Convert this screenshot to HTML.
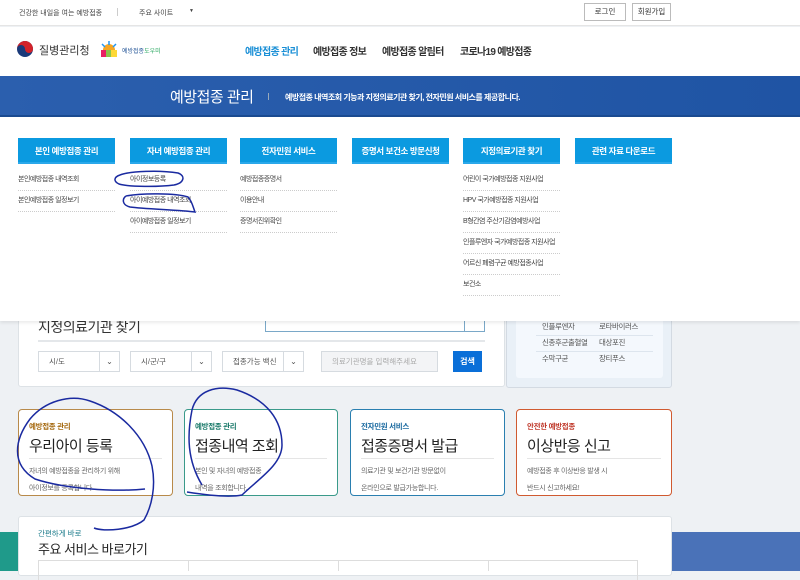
<!DOCTYPE html>
<html><head><meta charset="utf-8"><style>
*{margin:0;padding:0;box-sizing:border-box}
body{width:800px;height:571px;overflow:hidden;position:relative;background:#eef1f4;font-family:"Liberation Sans","Noto Sans CJK KR",sans-serif;color:#333}
.a{position:absolute}
.t{white-space:nowrap}
.btn{position:absolute;top:138px;height:26px;width:97px;background:#0b9ae0;color:#fff;font-size:8.5px;font-weight:bold;text-align:center;line-height:26px;border-bottom:2px solid #2aa8ea;letter-spacing:-0.4px}
.lk{position:absolute;font-size:7px;color:#444;width:97px;height:21px;line-height:20px;border-bottom:1px dotted #ccc;white-space:nowrap;letter-spacing:-0.5px}
.sel{position:absolute;top:351px;height:21px;border:1px solid #d6dbe0;background:#fff;font-size:7.5px;line-height:19px;padding-left:10px;color:#555}
.sel i{position:absolute;right:0;top:0;width:20px;height:19px;border-left:1px solid #d6dbe0;font-style:normal;text-align:center;font-size:8px}
.card{position:absolute;top:409px;height:87px;background:#fff;border:1px solid;border-radius:4px}
.card .c{position:absolute;left:10px;top:11px;font-size:7.5px;font-weight:bold;letter-spacing:-0.3px}
.card .h{position:absolute;left:10px;top:25px;font-size:15px;color:#222;letter-spacing:-0.5px}
.card .l{position:absolute;left:10px;right:10px;top:48px;border-top:1px solid #e5e5e5}
.card .d{position:absolute;left:10px;top:53px;font-size:7px;color:#666;line-height:17px;white-space:nowrap;letter-spacing:-0.3px}
</style></head><body>
<div class="a" style="left:0;top:0;width:800px;height:26px;background:#fff;border-bottom:1px solid #e5e5e5"></div>
<div class="a t" style="left:19px;top:8px;font-size:7px;color:#444">건강한 내일을 여는 예방접종</div>
<div class="a" style="left:117px;top:8px;width:1px;height:8px;background:#ccc"></div>
<div class="a t" style="left:139px;top:8px;font-size:7px;color:#444">주요 사이트</div>
<div class="a t" style="left:189px;top:8px;font-size:5px;color:#444">▼</div>
<div class="a t" style="left:584px;top:3px;width:42px;height:18px;border:1px solid #bbb;font-size:7.5px;text-align:center;line-height:16px;background:#fff">로그인</div>
<div class="a t" style="left:632px;top:3px;width:39px;height:18px;border:1px solid #bbb;font-size:7.5px;text-align:center;line-height:16px;background:#fff">회원가입</div>
<div class="a" style="left:0;top:27px;width:800px;height:49px;background:#fff"></div>
<svg class="a" style="left:17px;top:41px" width="16" height="16" viewBox="0 0 16 16"><circle cx="8" cy="8" r="8" fill="#1a3a7a"/><path d="M0 8a8 8 0 0 1 16 0a4 4 0 0 1-8 0a4 4 0 0 0-8 0z" fill="#d2232a"/></svg>
<div class="a t" style="left:39px;top:42px;font-size:11px;color:#333">질병관리청</div>
<svg class="a" style="left:99px;top:40px" width="20" height="18"><path d="M4 10a6 6 0 0 1 12 0" fill="#f5a623"/><rect x="2" y="10" width="16" height="7" fill="#8bc34a"/><rect x="2" y="10" width="5" height="7" fill="#e91e63"/><rect x="12" y="10" width="6" height="7" fill="#fdd835"/><path d="M10 1v4M3 4l3 3M17 4l-3 3" stroke="#2196f3" stroke-width="1.5"/></svg>
<div class="a t" style="left:122px;top:46px;font-size:6px;color:#2a5a9a">예방접종<span style="color:#2aa860">도우미</span></div>
<div class="a t" style="left:245px;top:43px;font-size:10px;font-weight:bold;color:#1a8fd6;letter-spacing:-0.7px">예방접종 관리</div>
<div class="a t" style="left:313px;top:43px;font-size:10px;font-weight:bold;color:#333;letter-spacing:-0.7px">예방접종 정보</div>
<div class="a t" style="left:382px;top:43px;font-size:10px;font-weight:bold;color:#333;letter-spacing:-0.7px">예방접종 알림터</div>
<div class="a t" style="left:460px;top:43px;font-size:10px;font-weight:bold;color:#333;letter-spacing:-0.7px">코로나19 예방접종</div>
<div class="a" style="left:0;top:76px;width:800px;height:41px;background:linear-gradient(90deg,#2b5fae,#1f54a4);border-bottom:2px solid #1a4a90"></div>
<div class="a t" style="left:170px;top:86px;font-size:15px;color:#fff;letter-spacing:-0.5px">예방접종 관리</div>
<div class="a" style="left:268px;top:93px;width:1px;height:7px;background:#9ab"></div>
<div class="a t" style="left:285px;top:92px;font-size:8px;color:#fff;font-weight:bold;letter-spacing:-0.5px">예방접종 내역조회 기능과 지정의료기관 찾기, 전자민원 서비스를 제공합니다.</div>
<div class="a" style="left:18px;top:280px;width:487px;height:107px;background:#fff;border:1px solid #dde2e6;border-radius:3px"></div>
<div class="a t" style="left:38px;top:317px;font-size:14px;color:#333;letter-spacing:-0.5px">지정의료기관 찾기</div>
<div class="a" style="left:265px;top:306px;width:220px;height:26px;border:1px solid #7aa8c8;background:#fff"></div>
<div class="a" style="left:464px;top:306px;width:1px;height:26px;background:#7aa8c8"></div>
<div class="a" style="left:38px;top:340px;width:447px;height:2px;background:#e4e7ea"></div>
<div class="sel" style="left:38px;width:82px">시/도<i>⌄</i></div>
<div class="sel" style="left:130px;width:82px">시/군/구<i>⌄</i></div>
<div class="sel" style="left:222px;width:82px">접종가능 백신<i>⌄</i></div>
<div class="a" style="left:321px;top:351px;width:117px;height:21px;background:#f3f4f6;border:1px solid #d6dbe0;font-size:7.5px;color:#aaa;line-height:19px;padding-left:10px">의료기관명을 입력해주세요</div>
<div class="a" style="left:453px;top:351px;width:29px;height:21px;background:#0a6fd8;color:#fff;font-size:8px;font-weight:bold;text-align:center;line-height:21px">검색</div>
<div class="a" style="left:506px;top:280px;width:166px;height:108px;background:#e9f0f7;border:1px solid #d3dae2;border-radius:3px"></div>
<div class="a" style="left:516px;top:280px;width:147px;height:98px;background:#f4f8fd;border-radius:3px"></div>
<div class="a t" style="left:542px;top:319px;font-size:7.5px;color:#555;line-height:16px;letter-spacing:-0.4px">인플루엔자<br>신종후군출혈열<br>수막구균</div>
<div class="a t" style="left:599px;top:319px;font-size:7.5px;color:#555;line-height:16px;letter-spacing:-0.4px">로타바이러스<br>대상포진<br>장티푸스</div>
<div class="a" style="left:536px;top:335px;width:117px;border-top:1px solid #dde5ee"></div>
<div class="a" style="left:536px;top:351px;width:117px;border-top:1px solid #dde5ee"></div>
<div class="card" style="left:18px;width:155px;border-color:#b88a4a"><div class="c" style="color:#a66a10">예방접종 관리</div><div class="h">우리아이 등록</div><div class="l"></div><div class="d">자녀의 예방접종을 관리하기 위해<br>아이정보를 등록합니다.</div></div>
<div class="card" style="left:184px;width:154px;border-color:#3a9a8a"><div class="c" style="color:#1a7a6a">예방접종 관리</div><div class="h">접종내역 조회</div><div class="l"></div><div class="d">본인 및 자녀의 예방접종<br>내역을 조회합니다.</div></div>
<div class="card" style="left:350px;width:155px;border-color:#2a7fb0"><div class="c" style="color:#1a6aa0">전자민원 서비스</div><div class="h">접종증명서 발급</div><div class="l"></div><div class="d">의료기관 및 보건기관 방문없이<br>온라인으로 발급가능합니다.</div></div>
<div class="card" style="left:516px;width:156px;border-color:#d05a30"><div class="c" style="color:#c0392b">안전한 예방접종</div><div class="h">이상반응 신고</div><div class="l"></div><div class="d">예방접종 후 이상반응 발생 시<br>반드시 신고하세요!</div></div>
<div class="a" style="left:0;top:532px;width:30px;height:39px;background:#1f9a8a"></div>
<div class="a" style="left:672px;top:532px;width:128px;height:39px;background:#4a72b8"></div>
<div class="a" style="left:18px;top:516px;width:654px;height:60px;background:#fff;border:1px solid #dde2e6;border-radius:3px"></div>
<div class="a t" style="left:38px;top:528px;font-size:7.5px;color:#1a7a8a">간편하게 바로</div>
<div class="a t" style="left:38px;top:539px;font-size:13px;color:#222;letter-spacing:-0.5px">주요 서비스 바로가기</div>
<div class="a" style="left:38px;top:560px;width:600px;height:20px;border:1px solid #ddd;border-bottom:0"></div>
<div class="a" style="left:188px;top:560px;width:1px;height:11px;background:#ddd"></div>
<div class="a" style="left:338px;top:560px;width:1px;height:11px;background:#ddd"></div>
<div class="a" style="left:488px;top:560px;width:1px;height:11px;background:#ddd"></div>
<div class="a" style="left:0;top:117px;width:800px;height:204px;background:#fff;box-shadow:0 2px 3px rgba(0,0,0,.08)"></div>
<div class="btn" style="left:18px">본인 예방접종 관리</div>
<div class="btn" style="left:130px">자녀 예방접종 관리</div>
<div class="btn" style="left:240px">전자민원 서비스</div>
<div class="btn" style="left:352px">증명서 보건소 방문신청</div>
<div class="btn" style="left:463px">지정의료기관 찾기</div>
<div class="btn" style="left:575px">관련 자료 다운로드</div>
<div class="lk" style="left:18px;top:170px">본인예방접종 내역조회</div>
<div class="lk" style="left:18px;top:191px">본인예방접종 일정보기</div>
<div class="lk" style="left:130px;top:170px">아이정보등록</div>
<div class="lk" style="left:130px;top:191px">아이예방접종 내역조회</div>
<div class="lk" style="left:130px;top:212px">아이예방접종 일정보기</div>
<div class="lk" style="left:240px;top:170px">예방접종증명서</div>
<div class="lk" style="left:240px;top:191px">이용안내</div>
<div class="lk" style="left:240px;top:212px">증명서진위확인</div>
<div class="lk" style="left:463px;top:170px">어린이 국가예방접종 지원사업</div>
<div class="lk" style="left:463px;top:191px">HPV 국가예방접종 지원사업</div>
<div class="lk" style="left:463px;top:212px">B형간염 주산기감염예방사업</div>
<div class="lk" style="left:463px;top:233px">인플루엔자 국가예방접종 지원사업</div>
<div class="lk" style="left:463px;top:254px">어르신 폐렴구균 예방접종사업</div>
<div class="lk" style="left:463px;top:275px">보건소</div>
<svg class="a" style="left:0;top:0" width="800" height="571"><g fill="none" stroke="#1a2aa0" stroke-width="1.5">
<path d="M120 175c10-4 40-5 58-2c8 3 6 10-4 12c-15 2-45 2-55-1c-6-3-5-7 1-9"/>
<path d="M126 196c15-3 50-3 62 1c4 4 5 10 7 15c-15-2-50-3-65-5c-8-2-8-8-4-11"/>
<path d="M145 489c-30 3-80 0-110-10c-25-15-20-40-5-60c15-18 40-25 60-18c30 10 55 35 62 65c4 20 0 40-8 54c-12 10-40 12-50 8"/>
<path d="M187 492c25 4 45 5 55 3c15-15 40-30 40-50c0-25-15-45-45-55c-20-5-40 0-45 20c-5 25-5 50 10 75"/>
</g></svg>
</body></html>
